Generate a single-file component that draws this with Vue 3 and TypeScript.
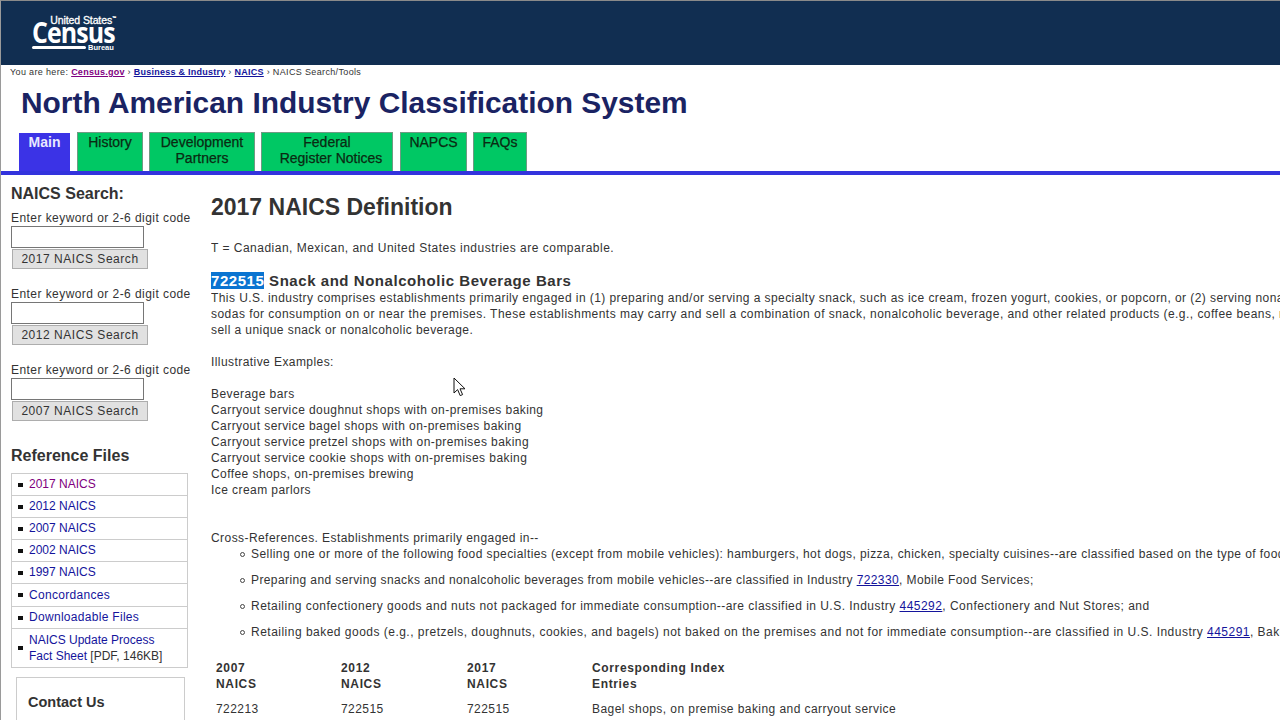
<script setup lang="ts">
interface Tab {
  label: string[]
  width: number
  active?: boolean
}

const tabs: Tab[] = [
  { label: ['Main'], width: 51, active: true },
  { label: ['History'], width: 66 },
  { label: ['Development', 'Partners'], width: 106 },
  { label: ['Federal', 'Register Notices'], width: 132 },
  { label: ['NAPCS'], width: 67 },
  { label: ['FAQs'], width: 54 }
]

const searches = ['2017 NAICS Search', '2012 NAICS Search', '2007 NAICS Search']

const refFiles = ['2012 NAICS', '2007 NAICS', '2002 NAICS', '1997 NAICS', 'Concordances', 'Downloadable Files']

const examples = [
  'Beverage bars',
  'Carryout service doughnut shops with on-premises baking',
  'Carryout service bagel shops with on-premises baking',
  'Carryout service pretzel shops with on-premises baking',
  'Carryout service cookie shops with on-premises baking',
  'Coffee shops, on-premises brewing',
  'Ice cream parlors'
]
</script>

<template>
  <div class="page">
    <header class="banner">
      <div class="logo">
        <span class="logo-top">United States<sup>™</sup></span>
        <span class="logo-main">Census</span>
        <div class="logo-foot"><i></i><span>Bureau</span></div>
      </div>
    </header>

    <div class="crumbs">
      You are here: <a class="visited" href="#">Census.gov</a> › <a href="#">Business &amp; Industry</a> ›
      <a href="#">NAICS</a> › NAICS Search/Tools
    </div>

    <h1>North American Industry Classification System</h1>

    <nav class="tabs">
      <div
        v-for="tab in tabs"
        :key="tab.label[0]"
        class="tab"
        :class="{ active: tab.active }"
        :style="{ width: tab.width + 'px' }"
      >
        <span v-for="line in tab.label" :key="line">{{ line }}</span>
      </div>
    </nav>

    <div class="body">
      <aside class="side">
        <h3 class="side-title">NAICS Search:</h3>
        <div v-for="s in searches" :key="s" class="search">
          <div class="search-label">Enter keyword or 2-6 digit code</div>
          <div class="fake-input"></div>
          <div class="fake-btn">{{ s }}</div>
        </div>

        <h3 class="ref-title">Reference Files</h3>
        <ul class="ref-list">
          <li><a class="visited" href="#">2017 NAICS</a></li>
          <li v-for="f in refFiles" :key="f"><a href="#">{{ f }}</a></li>
          <li class="two"><span><a href="#">NAICS Update Process<br />Fact Sheet</a> [PDF, 146KB]</span></li>
        </ul>

        <div class="contact">Contact Us</div>
      </aside>

      <main class="content">
        <h2>2017 NAICS Definition</h2>
        <p class="line legend">T = Canadian, Mexican, and United States industries are comparable.</p>

        <h4><mark>722515</mark> Snack and Nonalcoholic Beverage Bars</h4>
        <p class="line">This U.S. industry comprises establishments primarily engaged in (1) preparing and/or serving a specialty snack, such as ice cream, frozen yogurt, cookies, or popcorn, or (2) serving nonalcoholic beverages</p>
        <p class="line second">sodas for consumption on or near the premises. These establishments may carry and sell a combination of snack, nonalcoholic beverage, and other related products (e.g., coffee beans, mugs, coffee makers)</p>
        <p class="line">sell a unique snack or nonalcoholic beverage.</p>
        <p class="line gap">Illustrative Examples:</p>
        <div class="gap">
          <p v-for="e in examples" :key="e" class="line">{{ e }}</p>
        </div>
        <p class="line cross">Cross-References. Establishments primarily engaged in--</p>
        <ul class="cross-list">
          <li>Selling one or more of the following food specialties (except from mobile vehicles): hamburgers, hot dogs, pizza, chicken, specialty cuisines--are classified based on the type of food service</li>
          <li>Preparing and serving snacks and nonalcoholic beverages from mobile vehicles--are classified in Industry <a href="#">722330</a>, Mobile Food Services;</li>
          <li>Retailing confectionery goods and nuts not packaged for immediate consumption--are classified in U.S. Industry <a href="#">445292</a>, Confectionery and Nut Stores; and</li>
          <li>Retailing baked goods (e.g., pretzels, doughnuts, cookies, and bagels) not baked on the premises and not for immediate consumption--are classified in U.S. Industry <a href="#">445291</a>, Baked Goods Stores.</li>
        </ul>

        <div class="index-table">
          <b>2007<br />NAICS</b><b>2012<br />NAICS</b><b>2017<br />NAICS</b><b>Corresponding Index<br />Entries</b>
          <span>722213</span><span>722515</span><span>722515</span><span>Bagel shops, on premise baking and carryout service</span>
        </div>
      </main>
    </div>

    <svg class="cursor" width="14" height="20" viewBox="0 0 14 20">
      <path d="M1 1v15l3.6-3.4 2.6 6 2.4-1-2.6-5.8H12z" fill="#fff" stroke="#111" stroke-width="1" />
    </svg>
  </div>
</template>

<style>
html,
body {
  margin: 0;
  overflow: hidden;
  background: #fff;
}
</style>

<style scoped>
.page {
  position: relative;
  width: 1280px;
  height: 720px;
  overflow: hidden;
  background: #fff;
  box-sizing: border-box;
  border-top: 1px solid #8a8a8a;
  border-left: 1px solid #9a9a9a;
  font-family: "Liberation Sans", Arial, sans-serif;
  font-size: 12px;
  color: #333;
}

a {
  color: #14149c;
}

a.visited {
  color: #800080;
}

.banner {
  height: 64px;
  background: #112e51;
  padding: 12px 0 0 31px;
  box-sizing: border-box;
}

.logo {
  width: 84px;
  color: #fff;
  display: flex;
  flex-direction: column;
  font-weight: bold;
}

.logo-top {
  font-size: 10.5px;
  line-height: 10px;
  text-align: right;
  white-space: nowrap;
  font-weight: normal;
  -webkit-text-stroke: 0.3px #fff;
  letter-spacing: -0.1px;
}

.logo-top sup {
  font-size: 4px;
}

.logo-main {
  font-family: "Open Sans", sans-serif;
  font-size: 28px;
  line-height: 22px;
  letter-spacing: -1px;
  margin-top: -4px;
  transform: scaleX(0.89);
  transform-origin: left center;
}

.logo-foot {
  display: flex;
  align-items: center;
  gap: 2px;
  font-size: 7.5px;
  line-height: 8px;
  margin-top: 1px;
}

.logo-foot i {
  display: block;
  width: 54px;
  height: 3px;
  border-radius: 2px;
  background: #fff;
}

.crumbs {
  height: 13px;
  padding: 1px 0 0 9px;
  font-size: 9px;
  line-height: 13px;
  letter-spacing: 0.35px;
  white-space: nowrap;
  color: #333;
}

.crumbs a {
  font-weight: bold;
  letter-spacing: 0.25px;
}

h1 {
  margin: 7px 0 0 20px;
  font-size: 29.9px;
  line-height: 34px;
  font-weight: bold;
  color: #1a2363;
  white-space: nowrap;
}

.tabs {
  display: flex;
  gap: 6px;
  margin-top: 12px;
  padding-left: 18px;
  height: 39px;
  align-items: flex-end;
  border-bottom: 4px solid #3333dd;
}

.tab {
  height: 39px;
  box-sizing: border-box;
  background: #00c864;
  padding-top: 1px;
  display: flex;
  flex-direction: column;
  align-items: center;
  font-size: 14px;
  line-height: 16px;
  color: #0a2a12;
  -webkit-text-stroke: 0.25px #0a2a12;
  white-space: nowrap;
  border: 1px solid #6f9a83;
  border-bottom: 0;
}

.tab:nth-child(4) span:last-child {
  margin-left: 8px;
}

.tab:nth-child(5) {
  margin-left: 1px;
}

.tab.active {
  height: 38px;
  margin-right: 1px;
  background: #3b33e6;
  border: 0;
  padding-top: 1px;
  color: #e8e8ff;
  -webkit-text-stroke: 0;
  font-weight: bold;
}

.body {
  display: flex;
}

.side {
  width: 177px;
  margin-left: 10px;
  flex: none;
  padding-top: 10px;
}

.side-title {
  margin: 0;
  font-size: 16px;
  line-height: 18px;
  font-weight: bold;
}

.search {
  margin-top: 7px;
  height: 69px;
}

.search-label {
  line-height: 16px;
  white-space: nowrap;
  letter-spacing: 0.44px;
}

.fake-input {
  width: 131px;
  height: 20px;
  border: 1px solid #767676;
  background: #fff;
}

.fake-btn {
  width: 134px;
  height: 18px;
  margin: 1px 0 0 1px;
  background: #e1e1e1;
  border: 1px solid #adadad;
  text-align: center;
  line-height: 18px;
  white-space: nowrap;
  letter-spacing: 0.54px;
}

.ref-title {
  margin: 16px 0 0;
  font-size: 16px;
  line-height: 18px;
  font-weight: bold;
}

.ref-list {
  margin: 8px 0 0;
  padding: 0;
  list-style: none;
  border: 1px solid #ccc;
  width: 175px;
}

.ref-list li {
  position: relative;
  height: 22px;
  line-height: 21px;
  padding-left: 17px;
  border-bottom: 1px solid #ccc;
  box-sizing: border-box;
  white-space: nowrap;
  font-size: 12px;
}

.ref-list li::before {
  content: "";
  position: absolute;
  left: 6px;
  top: 9px;
  width: 5px;
  height: 4px;
  background: #111;
}

.ref-list a {
  text-decoration: none;
}

.ref-list li:nth-child(6) {
  height: 23px;
  line-height: 23px;
}

.ref-list li:nth-child(6) a,
.ref-list li:nth-child(7) a {
  letter-spacing: 0.3px;
}

.ref-list li.two {
  height: 38px;
  line-height: 16px;
  padding-top: 3px;
  border-bottom: 0;
}

.ref-list li.two::before {
  top: 17px;
}

.contact {
  width: 169px;
  height: 60px;
  margin: 9px 0 0 5px;
  border: 1px solid #ccc;
  box-sizing: border-box;
  padding: 16px 11px;
  font-size: 14.5px;
  font-weight: bold;
}

.content {
  margin-left: 23px;
  padding-top: 18px;
  width: 1100px;
  overflow: hidden;
  letter-spacing: 0.43px;
}

h2 {
  margin: 0;
  font-size: 23px;
  line-height: 28px;
  font-weight: bold;
  letter-spacing: 0;
  white-space: nowrap;
}

.line {
  margin: 0;
  line-height: 16px;
  white-space: nowrap;
}

.legend {
  margin-top: 19px;
  letter-spacing: 0.49px;
}

.second {
  letter-spacing: 0.465px;
}

h4 {
  margin: 17px 0 1px;
  font-size: 15px;
  line-height: 16px;
  font-weight: bold;
  letter-spacing: 0.55px;
  white-space: nowrap;
}

mark {
  background: #0a74d1;
  color: #fff;
}

.gap {
  margin-top: 16px;
}

.cross {
  margin-top: 32px;
}

.cross-list {
  margin: 0;
  padding: 0 0 0 40px;
  list-style: none;
}

.cross-list li {
  position: relative;
  line-height: 16px;
  margin-bottom: 10px;
  white-space: nowrap;
}

.cross-list li:nth-child(2) {
  letter-spacing: 0.4px;
}

.cross-list li:nth-child(3) {
  letter-spacing: 0.47px;
}

.cross-list li:nth-child(4) {
  letter-spacing: 0.485px;
}

.cross-list li::before {
  content: "";
  position: absolute;
  left: -11px;
  top: 6px;
  width: 3px;
  height: 3px;
  border: 1px solid #444;
  border-radius: 50%;
}

.index-table {
  display: grid;
  grid-template-columns: 125px 126px 125px 1fr;
  margin: 20px 0 0 5px;
  line-height: 16px;
}

.index-table b {
  padding-bottom: 9px;
  letter-spacing: 0.65px;
}

.cursor {
  position: absolute;
  left: 452px;
  top: 376px;
}
</style>
